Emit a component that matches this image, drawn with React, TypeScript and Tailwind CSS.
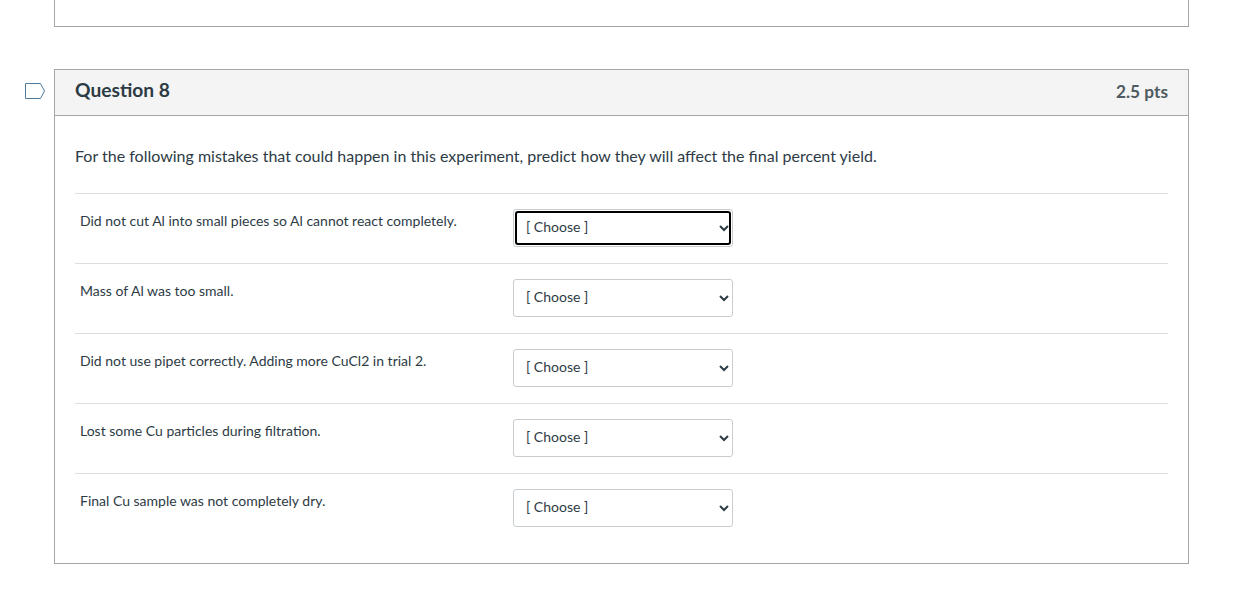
const rows = [
  "Did not cut Al into small pieces so Al cannot react completely.",
  "Mass of Al was too small.",
  "Did not use pipet correctly. Adding more CuCl2 in trial 2.",
  "Lost some Cu particles during filtration.",
  "Final Cu sample was not completely dry.",
];

function Flag() {
  return (
    <svg width="20" height="16" viewBox="0 0 20 16" fill="none" className="mt-[14px] ml-[25px] shrink-0">
      <path d="M0.5 0.5H15.5L19.5 8L15.5 15.5H0.5Z" fill="#fff" stroke="#4f7a9c" strokeWidth="1" />
    </svg>
  );
}

export default function App() {
  return (
    <div className="h-[608px] w-[1256px] overflow-hidden bg-white font-['Lato','Liberation_Sans',sans-serif] text-[#2d3b45]">
      <div className="ml-[54px] h-[27px] w-[1135px] border-x border-b border-[#a6a6a6]" />

      <div className="mt-[42px] flex items-start">
        <div className="w-[54px] shrink-0">
          <Flag />
        </div>
        <div className="h-[495px] w-[1135px] border border-[#a6a6a6]">
          <div className="flex h-[46px] items-start justify-between border-b border-[#a6a6a6] bg-[#f4f4f4] px-5">
            <h2 className="mt-[7px] text-[19.2px] leading-[26px] font-bold">Question 8</h2>
            <div className="mt-[11px] text-[17.3px] leading-[22px] font-bold text-[#4f5a62]">2.5 pts</div>
          </div>

          <div className="px-5 pt-[29px]">
            <p className="mb-[26px] text-base leading-[22px]">
              For the following mistakes that could happen in this experiment, predict how they will affect the final percent yield.
            </p>

            {rows.map((text, i) => (
              <div key={text} className="flex h-[70px] border-t border-[#dcdfe1]">
                <div className="w-[438px] shrink-0 pt-[17px] pl-[5px] text-sm leading-[20px]">{text}</div>
                <div className="relative mt-[15px] h-[38px] w-[220px]">
                  <select
                    defaultValue=""
                    className="h-[38px] w-[220px] rounded-[3px] border border-[#c7cdd1] bg-white pb-1 pl-2 text-sm"
                  >
                    <option value="">[ Choose ]</option>
                  </select>
                  {i === 0 && (
                    <div className="pointer-events-none absolute inset-x-[2px] inset-y-[2px] rounded-[3px] border-2 border-black" />
                  )}
                </div>
              </div>
            ))}
          </div>
        </div>
      </div>
    </div>
  );
}
